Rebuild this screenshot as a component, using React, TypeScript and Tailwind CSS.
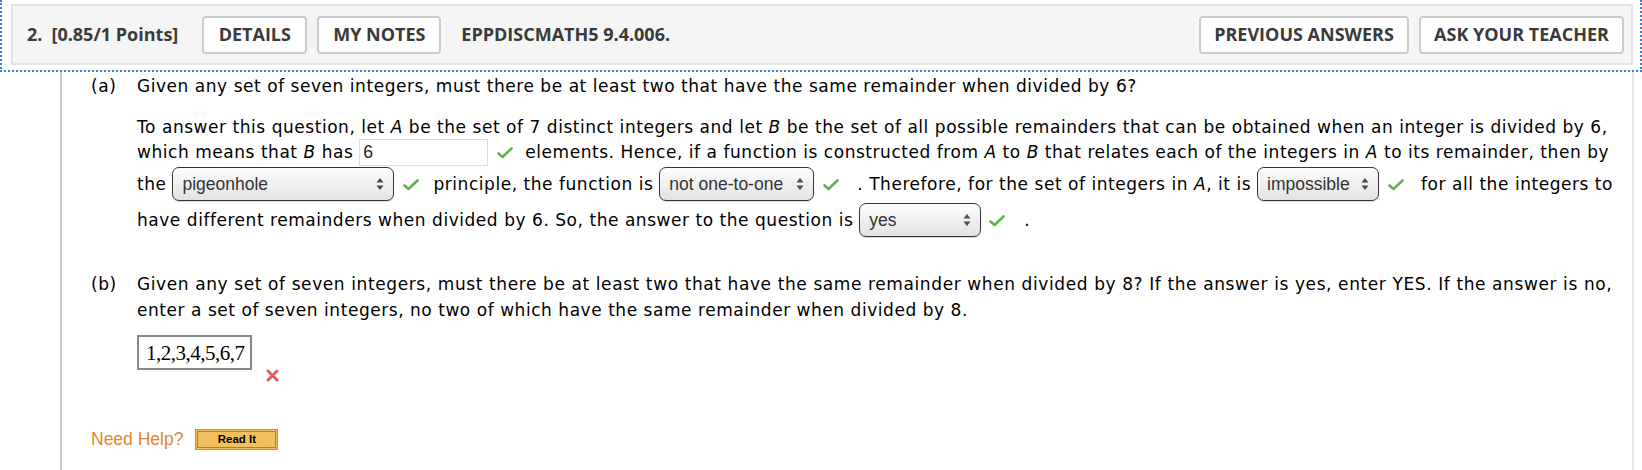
const Check = () => (
  <svg width="16" height="12" viewBox="0 0 16 12" className="inline-block shrink-0">
    <path d="M1.5 6.5 L5.5 10 L14.5 1.5" stroke="#62b04f" strokeWidth="2.6" fill="none" strokeLinecap="round" strokeLinejoin="round" />
  </svg>
)

const Cross = () => (
  <svg width="13" height="13" viewBox="0 0 13 13">
    <path d="M2 2 L11 11 M11 2 L2 11" stroke="#e25c5c" strokeWidth="3" strokeLinecap="round" />
  </svg>
)

const Arrows = () => (
  <svg width="8" height="14" viewBox="0 0 8 14" className="shrink-0">
    <path d="M4 1 L7.5 5.5 L0.5 5.5 Z M4 13 L7.5 8.5 L0.5 8.5 Z" fill="#4a4a4a" />
  </svg>
)

const Select = ({ value, w }: { value: string; w: string }) => (
  <span
    className={`inline-flex h-[34px] ${w} shrink-0 items-center justify-between rounded-[7px] border-[1.5px] border-[#353535] bg-linear-to-b from-[#fdfdfd] to-[#e2e2e2] pl-[9px] pr-[9px] font-['Liberation_Sans',sans-serif] text-[17.5px] tracking-normal text-[#333] shadow-[0_1px_1px_rgba(0,0,0,0.15)]`}
  >
    <span>{value}</span>
    <Arrows />
  </span>
)

const HeaderButton = ({ label, w }: { label: string; w: string }) => (
  <div className={`flex h-[38px] ${w} items-center justify-center rounded-[4px] border-2 border-[#cbcbcb] bg-white`}>
    {label}
  </div>
)

export default function App() {
  return (
    <div className="h-[470px] w-[1642px] overflow-hidden bg-white font-['DejaVu_Sans',sans-serif] text-[17px] tracking-[0.54px] text-black">
      <div className="border-x-2 border-b-2 border-dotted border-[#3b7fd9] pb-[5px] pl-[9px] pr-[7px] pt-[4px]">
        <div className="flex h-[61px] items-center border-2 border-[#e3e3e3] bg-[#f5f5f5] pl-[14px] pr-[7px] font-['Open_Sans',sans-serif] text-[18px] font-bold tracking-normal text-[#3a3a3a]">
          <span>2.</span>
          <span className="ml-[9px]">[0.85/1 Points]</span>
          <div className="ml-[24px] flex gap-[10px]">
            <HeaderButton label="DETAILS" w="w-[105px]" />
            <HeaderButton label="MY NOTES" w="w-[124px]" />
          </div>
          <span className="ml-[20px]">EPPDISCMATH5 9.4.006.</span>
          <div className="ml-auto flex gap-[10px]">
            <HeaderButton label="PREVIOUS ANSWERS" w="w-[210px]" />
            <HeaderButton label="ASK YOUR TEACHER" w="w-[205px]" />
          </div>
        </div>
      </div>

      <div className="ml-[60px] h-[400px] w-[1574px] border-l-2 border-r-2 border-l-[#cdcdcd] border-r-[#e8e8e8] pl-[29px]">
        <div className="flex pt-[2px]">
          <span className="w-[46px] shrink-0 leading-[25px]">(a)</span>
          <div className="leading-[25px]">
            <div>Given any set of seven integers, must there be at least two that have the same remainder when divided by 6?</div>
            <div className="mt-[16px] whitespace-nowrap">
              To answer this question, let <i>A</i> be the set of 7 distinct integers and let <i>B</i> be the set of all possible remainders that can be obtained when an integer is divided by 6,
            </div>
            <div className="flex h-[25px] items-center whitespace-nowrap">
              <span>which means that <i>B</i> has&nbsp;</span>
              <span className="flex h-[27px] w-[129px] items-center border border-[#dcdcdc] bg-white pl-[3px] font-['Liberation_Sans',sans-serif] text-[17.5px] tracking-normal text-[#222]">6</span>
              <span className="ml-[9px]"><Check /></span>
              <span className="ml-[12px]">elements. Hence, if a function is constructed from <i>A</i> to <i>B</i> that relates each of the integers in <i>A</i> to its remainder, then by</span>
            </div>
            <div className="mt-[2px] flex h-[34px] items-center whitespace-nowrap">
              <span>the&nbsp;</span>
              <Select value="pigeonhole" w="w-[222px]" />
              <span className="ml-[9px]"><Check /></span>
              <span className="ml-[14px]">principle, the function is&nbsp;</span>
              <Select value="not one-to-one" w="w-[155px]" />
              <span className="ml-[9px]"><Check /></span>
              <span className="ml-[18px]">. Therefore, for the set of integers in <i>A</i>, it is&nbsp;</span>
              <Select value="impossible" w="w-[122px]" />
              <span className="ml-[9px]"><Check /></span>
              <span className="ml-[17px]">for all the integers to</span>
            </div>
            <div className="mt-[2px] flex h-[34px] items-center whitespace-nowrap">
              <span>have different remainders when divided by 6. So, the answer to the question is&nbsp;</span>
              <Select value="yes" w="w-[122px]" />
              <span className="ml-[8px]"><Check /></span>
              <span className="ml-[19px]">.</span>
            </div>
          </div>
        </div>

        <div className="mt-[34px] flex">
          <span className="w-[46px] shrink-0 leading-[26px]">(b)</span>
          <div className="leading-[26px]">
            <div className="whitespace-nowrap tracking-[0.6px]">
              Given any set of seven integers, must there be at least two that have the same remainder when divided by 8? If the answer is yes, enter YES. If the answer is no,
            </div>
            <div>enter a set of seven integers, no two of which have the same remainder when divided by 8.</div>
            <div className="mt-[12px] flex items-start">
              <div className="flex h-[35px] w-[115px] items-center border-2 border-[#888] pl-[7px] font-['Liberation_Serif',serif] text-[21px] tracking-[-0.5px]">
                1,2,3,4,5,6,7
              </div>
              <div className="ml-[14px] mt-[34px]">
                <Cross />
              </div>
            </div>
          </div>
        </div>

        <div className="mt-[44px] flex items-center tracking-normal">
          <span className="font-['Liberation_Sans',sans-serif] text-[17.5px] text-[#e0882d]">Need Help?</span>
          <div className="ml-[12px] flex h-[21px] w-[83px] items-center justify-center border border-[#cf8a3c] bg-[#f2bf5d] p-[1px]">
            <div className="flex h-full w-full items-center justify-center border border-[#b87a2e] font-['Liberation_Sans',sans-serif] text-[11.5px] font-bold text-black">
              Read It
            </div>
          </div>
        </div>
      </div>
    </div>
  )
}
